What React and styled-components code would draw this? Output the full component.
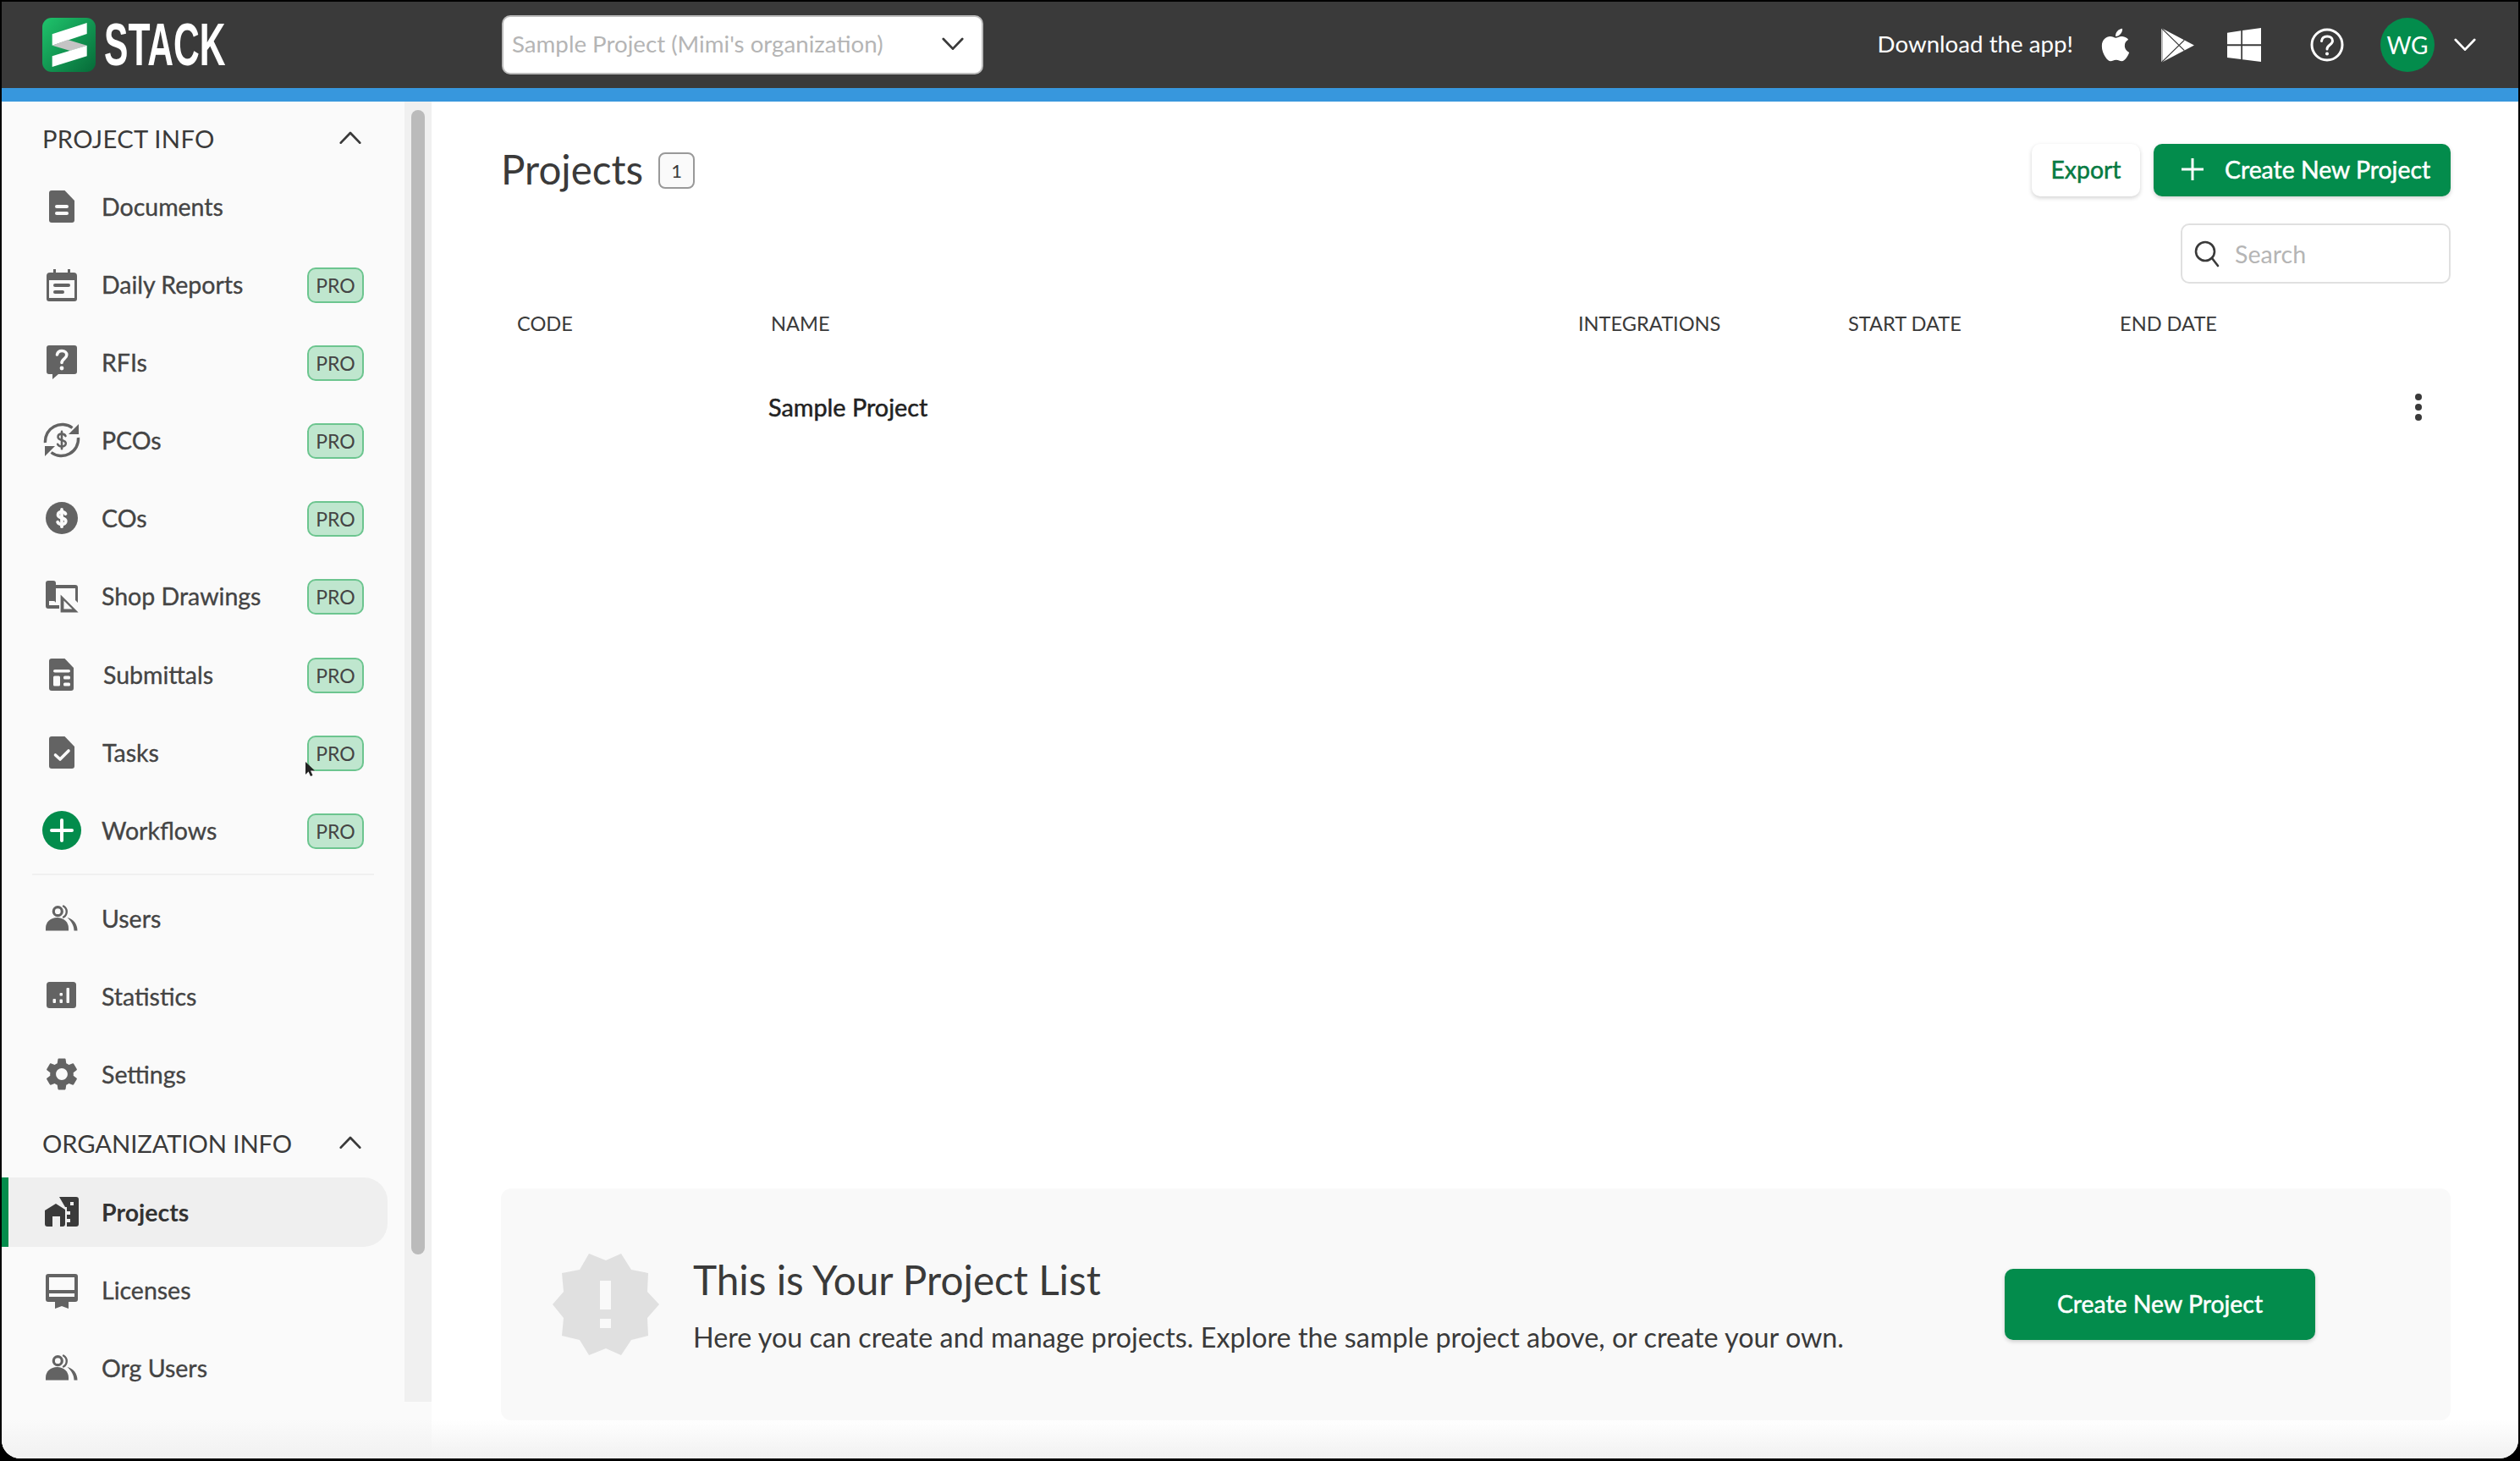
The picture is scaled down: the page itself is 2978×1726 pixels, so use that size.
import styled, { createGlobalStyle } from 'styled-components';
import { FaApple } from 'react-icons/fa';
import { MdSettings } from 'react-icons/md';

const GREEN = '#038c4c';
const FONT = '"Lato", "Open Sans", "Liberation Sans", sans-serif';

const Chevron = ({ up, color = '#3a3a3a', size = 26 }) => (
  <svg width={size} height={size * 0.6} viewBox="0 0 26 16" fill="none" stroke={color} strokeWidth="2.8" strokeLinecap="round" strokeLinejoin="round">
    <polyline points={up ? '1.5,14 13,2 24.5,14' : '1.5,2 13,14 24.5,2'} />
  </svg>
);

const Dollar = ({ stroke, weight = 3.4 }) => (
  <g fill="none" stroke={stroke} strokeWidth={weight} strokeLinecap="round">
    <path d="M30 17.5c-1-2.2-3.2-3.3-6-3.3-3.4 0-6 1.8-6 4.8 0 6.4 12.4 3.4 12.4 10 0 3-2.8 4.9-6.4 4.9-3.1 0-5.500-1.300-6.500-3.600" />
    <path d="M24 10.500v27" />
  </g>
);

const icons = {
  doc: (
    <>
      <path d="M12 5h15.500L39 17v23a3 3 0 0 1-3 3H12a3 3 0 0 1-3-3V8a3 3 0 0 1 3-3z" />
      <rect x="16" y="22" width="16" height="4" rx="2" fill="#fafafa" />
      <rect x="16" y="30" width="16" height="4" rx="2" fill="#fafafa" />
    </>
  ),
  calendar: (
    <>
      <path d="M10 10h4V6h3v4h14V6h3v4h4a4 4 0 0 1 4 4v27a3 3 0 0 1-3 3H9a3 3 0 0 1-3-3V14a4 4 0 0 1 4-4zm-1 9v21h30V19z" fillRule="evenodd" />
      <rect x="14" y="23" width="20" height="4" rx="2" />
      <rect x="14" y="31" width="13" height="4" rx="2" />
    </>
  ),
  rfi: (
    <>
      <path d="M9 4h30a3 3 0 0 1 3 3v28a3 3 0 0 1-3 3H20l-7 6v-6H9a3 3 0 0 1-3-3V7a3 3 0 0 1 3-3z" />
      <path d="M18.500 15c.6-3 3-4.500 5.700-4.500 3.200 0 5.600 2 5.600 4.800 0 4.600-5.800 4.600-5.800 9.200" fill="none" stroke="#fafafa" strokeWidth="3.600" strokeLinecap="round" />
      <circle cx="24" cy="31" r="2.400" fill="#fafafa" />
    </>
  ),
  pco: (
    <>
      <g fill="none" stroke="currentColor" strokeWidth="3.400">
        <path d="M4.500 27a20 20 0 0 1 32-17.500" />
        <path d="M43.500 21a20 20 0 0 1-32 17.500" />
      </g>
      <path d="M44 5v12H32z" />
      <path d="M4 43V31h12z" />
      <g transform="translate(6 6) scale(.75)"><Dollar stroke="currentColor" /></g>
    </>
  ),
  co: (
    <>
      <circle cx="24" cy="24" r="19" />
      <g transform="translate(6 6) scale(.75)"><Dollar stroke="#fafafa" weight={5} /></g>
    </>
  ),
  shop: (
    <>
      <path d="M8 6h6a3 3 0 0 1 3 3v2h23a3 3 0 0 1 3 3v18l-3-3V15H17v17a3 3 0 0 0-3-2H9v5h12v4H8a3 3 0 0 1-3-3V9a3 3 0 0 1 3-3z" />
      <path d="M22 21l23 23H22zm5 10v8h8z" fillRule="evenodd" stroke="#fafafa" strokeWidth="1.200" />
    </>
  ),
  submittal: (
    <>
      <path d="M12 5h15.500L38 16v24a3 3 0 0 1-3 3H12a3 3 0 0 1-3-3V8a3 3 0 0 1 3-3z" />
      <rect x="14" y="18" width="20" height="3.600" rx="1.800" fill="#fafafa" />
      <rect x="14" y="25.500" width="8" height="12" rx="1.500" fill="#fafafa" />
      <rect x="26" y="25.500" width="8" height="4" rx="1.500" fill="#fafafa" />
      <rect x="26" y="33.500" width="8" height="4" rx="1.500" fill="#fafafa" />
    </>
  ),
  task: (
    <>
      <path d="M12 5h15.500L39 17v23a3 3 0 0 1-3 3H12a3 3 0 0 1-3-3V8a3 3 0 0 1 3-3z" />
      <polyline points="16.500,27 22,32 32,22" fill="none" stroke="#fafafa" strokeWidth="3.600" strokeLinecap="round" strokeLinejoin="round" />
    </>
  ),
  users: (
    <>
      <circle cx="19.300" cy="15.700" r="5" fill="none" stroke="currentColor" strokeWidth="3.200" />
      <path d="M26 9.500a7.500 7.500 0 0 1 0 13" fill="none" stroke="currentColor" strokeWidth="2.400" strokeLinecap="round" />
      <path d="M5 38.500v-3c0-7.500 6-12.500 13.500-12.500S32 28 32 35.500v3z" />
      <path d="M30.500 23c7 1.500 12 7.500 12 15.500h-4c0-6-3.500-11.500-8-15.500z" />
    </>
  ),
  stats: (
    <>
      <rect x="6" y="7" width="35" height="31" rx="3.500" />
      <rect x="13.500" y="27" width="3.500" height="5" rx="1" fill="#fafafa" />
      <rect x="21.500" y="20" width="3.500" height="3.500" rx="1" fill="#fafafa" />
      <rect x="21.500" y="27.500" width="3.500" height="4.500" rx="1" fill="#fafafa" />
      <rect x="29.500" y="14" width="3.500" height="18" rx="1" fill="#fafafa" />
    </>
  ),
  projects: (
    <>
      <path d="M21 6h20a3 3 0 0 1 3 3v29a3 3 0 0 1-3 3H30v-5h4v-4h-4v-5h4v-4h-4v-5h-2zm13 6v4h4v-4z" fillRule="evenodd" />
      <path d="M17 14l11 7v17a3 3 0 0 1-3 3h-3V29h-9v12H7a3 3 0 0 1-3-3V22z" />
    </>
  ),
  license: (
    <>
      <path d="M8 5h32a3 3 0 0 1 3 3v27a3 3 0 0 1-3 3h-8v8l-8-3-8 3v-8H8a3 3 0 0 1-3-3V8a3 3 0 0 1 3-3zm1 4v15h30V9zm0 19v4h30v-4z" fillRule="evenodd" />
    </>
  ),
};

const navTop = [
  { label: 'Documents', icon: 'doc' },
  { label: 'Daily Reports', icon: 'calendar', pro: true },
  { label: 'RFIs', icon: 'rfi', pro: true },
  { label: 'PCOs', icon: 'pco', pro: true },
  { label: 'COs', icon: 'co', pro: true },
  { label: 'Shop Drawings', icon: 'shop', pro: true },
  { label: 'Submittals', icon: 'submittal', pro: true, nudge: 2 },
  { label: 'Tasks', icon: 'task', pro: true, nudge: 1 },
  { label: 'Workflows', icon: 'workflow', pro: true },
];

const navMid = [
  { label: 'Users', icon: 'users' },
  { label: 'Statistics', icon: 'stats' },
  { label: 'Settings', icon: 'settings' },
];

const navOrg = [
  { label: 'Projects', icon: 'projects', active: true },
  { label: 'Licenses', icon: 'license' },
  { label: 'Org Users', icon: 'users' },
];

function NavIcon({ name }) {
  if (name === 'workflow') {
    return (
      <svg width="46" height="46" viewBox="0 0 46 46">
        <circle cx="23" cy="23" r="23" fill={GREEN} />
        <path d="M23 11v24M11 23h24" stroke="#fff" strokeWidth="4" strokeLinecap="round" />
      </svg>
    );
  }
  if (name === 'settings') return <MdSettings size={46} />;
  return (
    <svg width="48" height="48" viewBox="0 0 48 48" fill="currentColor">
      {icons[name]}
    </svg>
  );
}

function NavRow({ item }) {
  return (
    <Row $active={item.active}>
      <IconBox $active={item.active}>
        <NavIcon name={item.icon} />
      </IconBox>
      <RowLabel $active={item.active} $nudge={item.nudge}>{item.label}</RowLabel>
      {item.pro && <ProBadge>PRO</ProBadge>}
    </Row>
  );
}

const columns = ['CODE', 'NAME', 'INTEGRATIONS', 'START DATE', 'END DATE'];

export default function App() {
  return (
    <Frame>
      <GlobalStyle />
      <Window>
        <TopBar>
          <Logo>
            <svg width="63" height="64" viewBox="0 0 63 64">
              <defs>
                <linearGradient id="logoFill" x1="0" y1="0" x2="1" y2="1">
                  <stop offset="0" stopColor="#1fc46c" />
                  <stop offset="1" stopColor="#066a38" />
                </linearGradient>
              </defs>
              <rect width="63" height="64" rx="11" fill="url(#logoFill)" />
              <polygon points="11.700,19.300 52.700,6 52.700,19 11.700,32.700" fill="#fff" />
              <polygon points="11.700,32.700 30,26 52.700,32.700 33,39" fill="#c4c4c4" />
              <polygon points="52.700,32.700 52.700,45.300 11.700,58 11.700,45.300" fill="#fff" />
            </svg>
            <LogoWord><span>STACK</span></LogoWord>
          </Logo>
          <ProjectSelect>
            <span>Sample Project (Mimi's organization)</span>
            <Chevron color="#3a3a3a" />
          </ProjectSelect>
          <BarRight>
            <DownloadText>Download the app!</DownloadText>
            <BarIcon $gap={28}><FaApple size={44} color="#fff" /></BarIcon>
            <BarIcon $gap={32}>
              <svg width="40" height="41" viewBox="0 0 38 40" preserveAspectRatio="none">
                <polygon points="0,0 37,20 0,40" fill="#fff" />
                <path d="M0 0l26 26M0 40l26-26" stroke="#3a3a3a" strokeWidth="1.200" />
                <path d="M1 1v38" stroke="#3a3a3a" strokeWidth=".6" />
              </svg>
            </BarIcon>
            <BarIcon $gap={38}>
              <svg width="40" height="40" viewBox="0 0 40 40" fill="#fff">
                <polygon points="0,5.700 16.300,3.300 16.300,19.300 0,19.300" />
                <polygon points="18,3 40,0 40,19.300 18,19.300" />
                <polygon points="0,21.300 16.300,21.300 16.300,37 0,35" />
                <polygon points="18,21.300 40,21.300 40,40 18,37.300" />
              </svg>
            </BarIcon>
            <BarIcon $gap={58}>
              <svg width="40" height="40" viewBox="0 0 40 40" fill="none" stroke="#fff">
                <circle cx="20" cy="20" r="18" strokeWidth="3" />
                <path d="M13.500 15.500c.5-3.500 3.200-5.500 6.700-5.500 3.700 0 6.300 2.200 6.300 5.200 0 4.800-6.500 4.800-6.500 9.800" strokeWidth="3" strokeLinecap="round" />
                <circle cx="20" cy="30.500" r="1.300" strokeWidth="1.400" fill="#fff" />
              </svg>
            </BarIcon>
            <BarIcon $gap={43}><Avatar>WG</Avatar></BarIcon>
            <BarIcon $gap={23}><Chevron color="#fff" /></BarIcon>
          </BarRight>
        </TopBar>
        <AccentLine />
        <Body>
          <SideColumn>
            <SideScroll>
              <SideNav>
                <SectionHead>
                  <span>PROJECT INFO</span>
                  <Chevron up />
                </SectionHead>
                {navTop.map((item) => <NavRow key={item.label} item={item} />)}
                <NavDivider />
                {navMid.map((item) => <NavRow key={item.label} item={item} />)}
                <SectionHead $org>
                  <span>ORGANIZATION INFO</span>
                  <Chevron up />
                </SectionHead>
                {navOrg.map((item) => <NavRow key={item.label} item={item} />)}
              </SideNav>
              <ScrollTrack>
                <ScrollThumb />
              </ScrollTrack>
            </SideScroll>
            <Cursor viewBox="0 0 12 18" width="12" height="18">
              <path d="M1 0v15l3.500-3.500L7 17l2.500-1L7 10.500h5z" fill="#222" />
            </Cursor>
          </SideColumn>
          <Main>
            <TitleRow>
              <PageTitle>Projects</PageTitle>
              <CountBadge>1</CountBadge>
              <Actions>
                <ExportButton>Export</ExportButton>
                <CreateButton>
                  <svg width="28" height="28" viewBox="0 0 28 28">
                    <path d="M14 1v26M1 14h26" stroke="#fff" strokeWidth="3" />
                  </svg>
                  Create New Project
                </CreateButton>
              </Actions>
            </TitleRow>
            <SearchRow>
              <SearchBox>
                <svg width="30" height="32" viewBox="0 0 30 32" fill="none" stroke="#3a3a3a" strokeWidth="2.600">
                  <circle cx="13" cy="13" r="11" />
                  <path d="M21 21l7 9" strokeLinecap="round" />
                </svg>
                <span>Search</span>
              </SearchBox>
            </SearchRow>
            <TableHead>
              {columns.map((c) => <HeadCell key={c}>{c}</HeadCell>)}
            </TableHead>
            <TableRow>
              <ProjectName>Sample Project</ProjectName>
              <Kebab>
                <i /><i /><i />
              </Kebab>
            </TableRow>
            <Banner>
              <svg width="126" height="120" viewBox="0 0 126 120">
                <polygon
                  points="43,0 63,8 81,0 93,19 113,23 112,45 126,60 112,76 113,97 93,102 81,120 63,112 43,120 32,102 11,97 13,76 0,60 13,45 11,23 32,19"
                  fill="#e0e0e0"
                />
                <rect x="56" y="32" width="13" height="34" fill="#f9f9f9" />
                <rect x="56" y="77" width="13" height="11" fill="#f9f9f9" />
              </svg>
              <BannerText>
                <BannerTitle>This is Your Project List</BannerTitle>
                <BannerSub>Here you can create and manage projects. Explore the sample project above, or create your own.</BannerSub>
              </BannerText>
              <BannerButton>Create New Project</BannerButton>
            </Banner>
          </Main>
        </Body>
      </Window>
    </Frame>
  );
}

const GlobalStyle = createGlobalStyle`
  html, body { margin: 0; padding: 0; background: #000; }
  * { box-sizing: border-box; }
  body { font-family: ${FONT}; color: #3a3a3a; }
`;

const Frame = styled.div`
  width: 2978px;
  height: 1726px;
  padding: 2px 2px 3px;
  background: #000;
`;

const Window = styled.div`
  height: 100%;
  display: flex;
  flex-direction: column;
  overflow: hidden;
  border-radius: 0 0 22px 22px;
  background: #fff;
`;

const TopBar = styled.header`
  height: 102px;
  flex: none;
  display: flex;
  align-items: center;
  padding: 0 50px 0 48px;
  background: #3a3a3a;
`;

const Logo = styled.div`
  display: flex;
  align-items: center;
  gap: 10px;
  width: 543px;
  flex: none;
`;

const LogoWord = styled.div`
  width: 146px;
  color: #fff;
  font: bold 71px/64px "Liberation Sans", sans-serif;

  span {
    display: inline-block;
    transform: scaleX(0.6);
    transform-origin: left center;
  }
`;

const ProjectSelect = styled.div`
  width: 569px;
  height: 70px;
  flex: none;
  display: flex;
  align-items: center;
  justify-content: space-between;
  padding: 0 21px 3px 10px;
  background: #fff;
  border: 2px solid #bcbcbc;
  border-radius: 10px;
  color: #b5b5b5;
  font-size: 27.7px;
`;

const BarRight = styled.div`
  margin-left: auto;
  display: flex;
  align-items: center;
`;

const BarIcon = styled.div`
  margin-left: ${(p) => p.$gap}px;
  display: flex;
  align-items: center;
`;

const DownloadText = styled.span`
  color: #fff;
  font-size: 27.7px;
  padding-bottom: 3px;
`;

const Avatar = styled.div`
  width: 64px;
  height: 64px;
  border-radius: 50%;
  background: ${GREEN};
  color: #fff;
  display: flex;
  align-items: center;
  justify-content: center;
  font-size: 28px;
`;

const AccentLine = styled.div`
  height: 16px;
  flex: none;
  background: #3797dd;
`;

const Body = styled.div`
  flex: 1;
  min-height: 0;
  display: flex;
  background: linear-gradient(to bottom, #fff calc(100% - 46px), #f1f1f1 100%);
`;

const SideColumn = styled.aside`
  position: relative;
  width: 508px;
  flex: none;
  background: linear-gradient(to bottom, #fafafa calc(100% - 46px), #f1f1f1 100%);
`;

const SideScroll = styled.div`
  height: 1536px;
  display: flex;
`;

const SideNav = styled.nav`
  width: 476px;
  flex: none;
  padding: 13px 20px 0 0;
`;

const SectionHead = styled.div`
  height: 60px;
  margin: ${(p) => (p.$org ? '7px' : '0')} 28px ${(p) => (p.$org ? '11px' : '10px')} 48px;
  display: flex;
  align-items: center;
  justify-content: space-between;
  font-size: 29.2px;
  letter-spacing: ${(p) => (p.$org ? '-0.1px' : '0.3px')};
  color: #3a3a3a;

  svg { margin-right: 3px; }
`;

const Row = styled.div`
  height: 82px;
  margin-bottom: 10.1px;
  padding-right: 28px;
  display: flex;
  align-items: center;
  color: ${(p) => (p.$active ? '#333' : '#444')};
  background: ${(p) => (p.$active ? '#efefef' : 'transparent')};
  border-left: 8px solid ${(p) => (p.$active ? GREEN : 'transparent')};
  border-radius: 0 28px 28px 0;
`;

const IconBox = styled.div`
  width: 48px;
  height: 48px;
  margin-left: 39px;
  flex: none;
  display: flex;
  align-items: center;
  justify-content: center;
  color: ${(p) => (p.$active ? '#3a3a3a' : '#636363')};
`;

const RowLabel = styled.span`
  margin-left: ${(p) => 23 + (p.$nudge || 0)}px;
  font-size: 28.5px;
  font-weight: ${(p) => (p.$active ? 700 : 400)};
  -webkit-text-stroke: ${(p) => (p.$active ? 0 : '0.35px')};
`;

const ProBadge = styled.span`
  width: 67px;
  height: 42px;
  margin: 2px 0 0 auto;
  display: flex;
  align-items: center;
  justify-content: center;
  background: #bfe6ce;
  border: 2px solid #6cc58f;
  border-radius: 10px;
  font-size: 23px;
  color: #444;
`;

const NavDivider = styled.div`
  height: 2px;
  margin: 0 16px 10px 36px;
  background: #f0f0f0;
`;

const ScrollTrack = styled.div`
  width: 32px;
  flex: none;
  padding: 10px 8px 0;
  background: #f0f0f0;
`;

const ScrollThumb = styled.div`
  height: 1352px;
  border-radius: 8px;
  background: #bbb;
`;

const Cursor = styled.svg`
  position: absolute;
  left: 358px;
  top: 780px;
`;

const Main = styled.main`
  flex: 1;
  min-width: 0;
  display: flex;
  flex-direction: column;
  padding: 50px 80px 45px 82px;
`;

const TitleRow = styled.div`
  height: 62px;
  display: flex;
  align-items: center;
`;

const PageTitle = styled.h1`
  margin: 0;
  padding-bottom: 3px;
  font-size: 47.5px;
  font-weight: 400;
  color: #3a3a3a;
`;

const CountBadge = styled.span`
  width: 43px;
  height: 43px;
  margin-left: 18px;
  display: flex;
  align-items: center;
  justify-content: center;
  background: #fafafa;
  border: 2px solid #999;
  border-radius: 8px;
  font-size: 22px;
`;

const Actions = styled.div`
  margin-left: auto;
  display: flex;
  gap: 16px;
`;

const ExportButton = styled.button`
  width: 128px;
  height: 62px;
  padding: 0 0 3px;
  border: 0;
  border-radius: 10px;
  background: #fff;
  color: #067a42;
  font: 400 28.4px ${FONT};
  -webkit-text-stroke: 0.5px;
  box-shadow: 0 2px 5px rgba(0, 0, 0, 0.18);
`;

const CreateButton = styled.button`
  width: 351px;
  height: 62px;
  padding: 0 0 3px 32px;
  display: flex;
  align-items: center;
  gap: 24px;
  border: 0;
  border-radius: 10px;
  background: ${GREEN};
  color: #fff;
  font: 400 28.4px ${FONT};
  -webkit-text-stroke: 0.5px;
  box-shadow: 0 2px 5px rgba(0, 0, 0, 0.18);
`;

const SearchRow = styled.div`
  margin-top: 32px;
  display: flex;
  justify-content: flex-end;
`;

const SearchBox = styled.div`
  width: 319px;
  height: 71px;
  padding-left: 14px;
  display: flex;
  align-items: center;
  gap: 18px;
  border: 2px solid #e0e0e0;
  border-radius: 10px;
  color: #b5b5b5;
  font-size: 28.6px;
`;

const TableHead = styled.div`
  margin-top: 30px;
  height: 34px;
  padding-left: 19px;
  display: grid;
  grid-template-columns: 300px 954px 319px 321px 1fr;
  align-items: center;
`;

const HeadCell = styled.span`
  font-size: 23.6px;
  color: #3a3a3a;
`;

const TableRow = styled.div`
  margin-top: 65px;
  height: 34px;
  padding: 0 34px 0 316px;
  display: flex;
  align-items: center;
  justify-content: space-between;
`;

const ProjectName = styled.span`
  font-size: 28.8px;
  font-weight: 400;
  -webkit-text-stroke: 0.5px;
  color: #222;
`;

const Kebab = styled.div`
  display: flex;
  flex-direction: column;
  gap: 4px;

  i {
    display: block;
    width: 8px;
    height: 8px;
    border-radius: 50%;
    background: #3a3a3a;
  }
`;

const Banner = styled.section`
  margin-top: auto;
  height: 274px;
  padding: 0 160px 0 61px;
  display: flex;
  align-items: center;
  background: #f9f9f9;
  border-radius: 12px;
`;

const BannerText = styled.div`
  margin-left: 40px;
  display: flex;
  flex-direction: column;
  gap: 20px;
`;

const BannerTitle = styled.h2`
  margin: 0;
  font-size: 47.7px;
  font-weight: 400;
  color: #3a3a3a;
`;

const BannerSub = styled.p`
  margin: 0;
  font-size: 32.3px;
  color: #3a3a3a;
`;

const BannerButton = styled.button`
  margin-left: auto;
  width: 367px;
  height: 84px;
  padding: 0 0 3px;
  border: 0;
  border-radius: 10px;
  background: ${GREEN};
  color: #fff;
  font: 400 28.4px ${FONT};
  -webkit-text-stroke: 0.5px;
  box-shadow: 0 2px 5px rgba(0, 0, 0, 0.18);
`;
